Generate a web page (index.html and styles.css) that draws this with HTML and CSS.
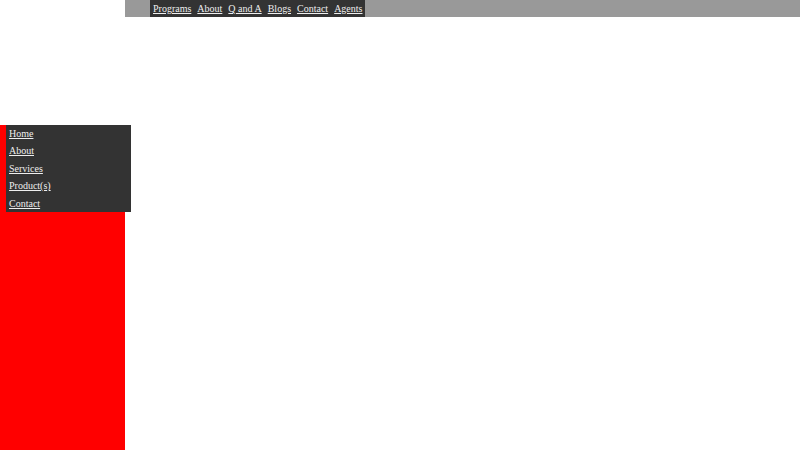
FILE: index.html
```html
<!DOCTYPE html>
<html>
<head>
<meta charset="utf-8">
<link rel="stylesheet" href="styles.css">
</head>
<body>
<div class="page">
  <div class="top">
    <div class="corner"></div>
    <div class="bar">
      <nav class="topnav">
        <a href="#">Programs</a>
        <a href="#">About</a>
        <a href="#">Q and A</a>
        <a href="#">Blogs</a>
        <a href="#">Contact</a>
        <a href="#">Agents</a>
      </nav>
    </div>
  </div>
  <div class="main">
    <div class="side">
      <ul class="sidenav">
        <li><a href="#">Home</a></li>
        <li><a href="#">About</a></li>
        <li><a href="#">Services</a></li>
        <li><a href="#">Product(s)</a></li>
        <li><a href="#">Contact</a></li>
      </ul>
    </div>
    <div class="content"></div>
  </div>
</div>
</body>
</html>
```
FILE: styles.css
```css
html, body {
  margin: 0;
  padding: 0;
  background: #fff;
  font-family: "Liberation Serif", "Times New Roman", serif;
  font-size: 10px;
}
.page {
  display: flex;
  flex-direction: column;
  height: 450px;
  overflow: hidden;
}
.top {
  display: flex;
  height: 17px;
}
.corner {
  width: 125px;
  background: #fff;
}
.bar {
  flex: 1;
  background: #999;
  padding-left: 25px;
  display: flex;
}
.topnav {
  background: #333;
  display: flex;
  padding: 0 0;
  align-items: center;
}
.topnav a {
  color: #eee;
  padding: 0 3px;
  line-height: 17px;
}
.main {
  flex: 1;
  display: flex;
}
.side {
  width: 125px;
  margin-top: 108px;
  background: #f00;
}
.sidenav {
  list-style: none;
  margin: 0 0 0 6px;
  padding: 0;
  width: 125px;
  background: #333;
}
.sidenav li {
  height: 17.4px;
  line-height: 17.4px;
  padding-left: 3px;
}
.sidenav a {
  color: #eee;
}
.content {
  flex: 1;
}
```
